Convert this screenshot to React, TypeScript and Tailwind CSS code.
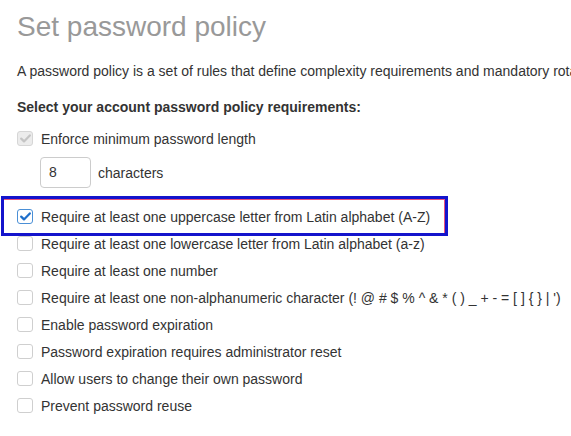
import React from "react";

function Box({ state }: { state: "off" | "on" | "disabled" }) {
  if (state === "on") {
    return (
      <span className="w-4 h-[15px] shrink-0 rounded-[3px] border border-[#4a8fd6] bg-white flex items-center justify-center">
        <svg width="11" height="9" viewBox="0 0 11 9">
          <path d="M1.2 4.6 L4 7.4 L9.8 1.4" fill="none" stroke="#1f6fca" strokeWidth="2.2" strokeLinecap="round" strokeLinejoin="round" />
        </svg>
      </span>
    );
  }
  if (state === "disabled") {
    return (
      <span className="w-4 h-[15px] shrink-0 rounded-[3px] border border-[#d6d6d6] bg-[#ececec] flex items-center justify-center">
        <svg width="11" height="9" viewBox="0 0 11 9">
          <path d="M1.2 4.6 L4 7.4 L9.8 1.4" fill="none" stroke="#c4c4c4" strokeWidth="2.2" strokeLinecap="round" strokeLinejoin="round" />
        </svg>
      </span>
    );
  }
  return <span className="w-4 h-[15px] shrink-0 rounded-[3px] border border-[#cfcfcf] bg-white" />;
}

function Row({ label, state = "off" as "off" | "on" | "disabled" }: { label: string; state?: "off" | "on" | "disabled" }) {
  return (
    <div className="h-[27px] flex items-center gap-2 whitespace-nowrap">
      <Box state={state} />
      <span className="text-[14px] leading-5 text-[#333]">{label}</span>
    </div>
  );
}

export default function App() {
  const rows = [
    "Require at least one lowercase letter from Latin alphabet (a-z)",
    "Require at least one number",
    "Require at least one non-alphanumeric character (! @ # $ % ^ & * ( ) _ + - = [ ] { } | ')",
    "Enable password expiration",
    "Password expiration requires administrator reset",
    "Allow users to change their own password",
    "Prevent password reuse",
  ];
  return (
    <div className="relative w-[571px] h-[436px] overflow-hidden bg-white pl-[17px] pt-[9px] font-['Liberation_Sans',Arial,sans-serif] text-[#333]">
      <h1 className="text-[28px] leading-[36px] text-[#999] whitespace-nowrap">Set password policy</h1>
      <p className="mt-4 text-[14px] leading-5 whitespace-nowrap">
        A password policy is a set of rules that define complexity requirements and mandatory rotation periods for your IAM users' passwords.
      </p>
      <p className="mt-4 text-[14px] leading-5 font-bold whitespace-nowrap">Select your account password policy requirements:</p>
      <div className="mt-2">
        <Row label="Enforce minimum password length" state="disabled" />
        <div className="mt-[5px] ml-[23px] flex items-center gap-[7px]">
          <div className="w-[51px] h-[31px] rounded-[4px] border border-[#ccc] flex items-center pl-[8px] text-[14px]">8</div>
          <span className="text-[14px] leading-5">characters</span>
        </div>
        <div className="mt-[15px]">
          <Row label="Require at least one uppercase letter from Latin alphabet (A-Z)" state="on" />
          {rows.map((r) => (
            <Row key={r} label={r} />
          ))}
        </div>
      </div>
      <div className="absolute left-[1px] top-[196px] w-[447px] h-[40px] border-[3px] border-[#1414cc] pointer-events-none">
        <div className="w-full h-full border-t border-r border-[#e8547c]" />
      </div>
    </div>
  );
}
